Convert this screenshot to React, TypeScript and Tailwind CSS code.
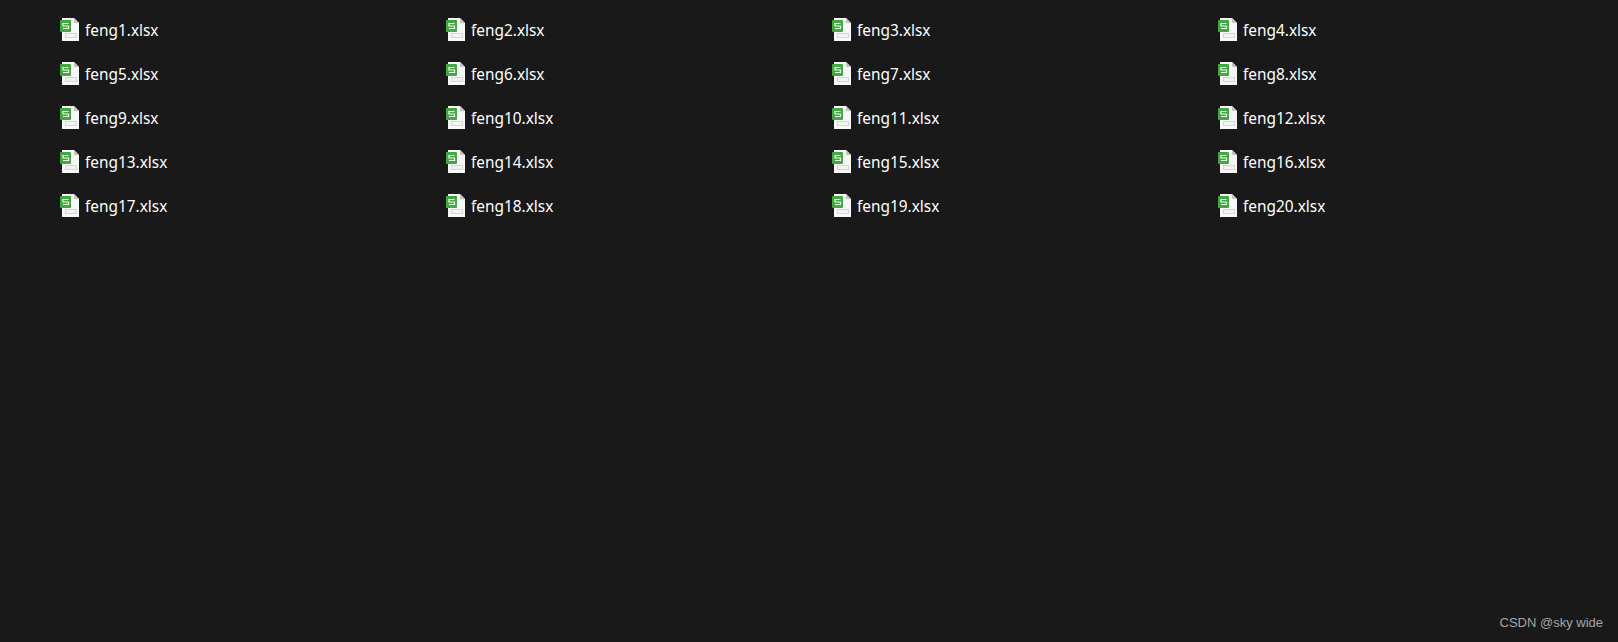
const files = Array.from({ length: 20 }, (_, i) => `feng${i + 1}.xlsx`);

const XlsxIcon = () => (
  <svg className="shrink-0" width="20" height="24" viewBox="0 0 20 24">
    <path d="M2 0h12l5 5v18H2z" fill="#f8f8f8" />
    <path d="M14 0l5 5h-5z" fill="#c4c4c4" />
    <rect x="5.5" y="15.5" width="11" height="4" fill="#f2f2f2" stroke="#d6d6d6" />
    <rect x="0" y="2" width="11" height="12" rx="1" fill="#43a83f" />
    <path d="M8.5 5.5H3V8h5.5v2.5H3" stroke="#f2faf1" strokeWidth="1.2" fill="none" />
  </svg>
);

export default function App() {
  return (
    <div className="relative h-[642px] w-[1618px] overflow-hidden bg-[#191919] font-['Noto_Sans',sans-serif]">
      <div className="grid grid-cols-[repeat(4,386px)] pl-[60px] pt-[8px]">
        {files.map((name) => (
          <div key={name} className="flex h-[44px] items-center gap-[5px]">
            <XlsxIcon />
            <span className="pt-[2px] text-[15.4px] text-white">{name}</span>
          </div>
        ))}
      </div>
      <div className="absolute bottom-[10px] right-[15px] font-['Liberation_Sans',sans-serif] text-[13px] text-[#a6a6a6]">
        CSDN @sky wide
      </div>
    </div>
  );
}
